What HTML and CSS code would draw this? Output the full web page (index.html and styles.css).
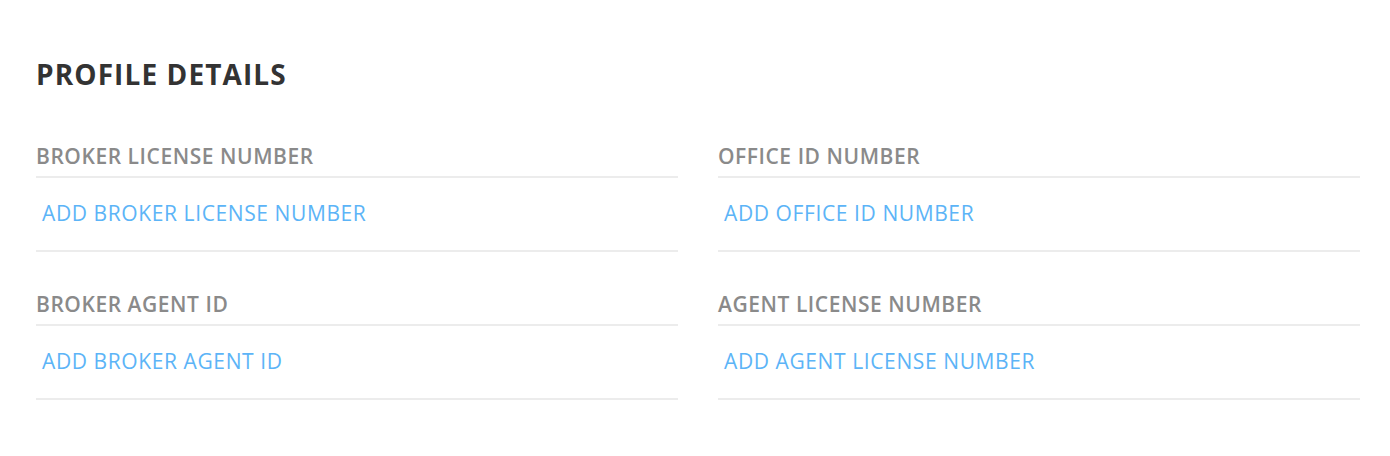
FILE: index.html
```html
<!DOCTYPE html>
<html>
<head>
<meta charset="utf-8">
<link rel="stylesheet" href="styles.css">
</head>
<body>
<div class="page">
  <h1 class="title">PROFILE DETAILS</h1>
  <div class="grid">
    <div class="field">
      <div class="label">BROKER LICENSE NUMBER</div>
      <div class="value"><a class="add">ADD BROKER LICENSE NUMBER</a></div>
    </div>
    <div class="field">
      <div class="label">OFFICE ID NUMBER</div>
      <div class="value"><a class="add">ADD OFFICE ID NUMBER</a></div>
    </div>
    <div class="field">
      <div class="label">BROKER AGENT ID</div>
      <div class="value"><a class="add">ADD BROKER AGENT ID</a></div>
    </div>
    <div class="field">
      <div class="label">AGENT LICENSE NUMBER</div>
      <div class="value"><a class="add">ADD AGENT LICENSE NUMBER</a></div>
    </div>
  </div>
</div>
</body>
</html>
```
FILE: styles.css
```css
html, body {
  margin: 0;
  padding: 0;
  background: #ffffff;
}
body {
  font-family: "Open Sans", "Liberation Sans", sans-serif;
}
.page {
  padding: 55px 30px 0 36px;
}
.title {
  margin: 0;
  font-size: 28px;
  line-height: 38px;
  font-weight: 700;
  letter-spacing: 1.1px;
  color: #333333;
}
.grid {
  margin-top: 49px;
  display: grid;
  grid-template-columns: 1fr 1fr;
  column-gap: 40px;
  row-gap: 38px;
}
.label {
  font-size: 21px;
  line-height: 28px;
  font-weight: 600;
  letter-spacing: 0.55px;
  color: #8a8a8a;
  padding-bottom: 6px;
  border-bottom: 2px solid #ececec;
}
.value {
  padding: 21px 0 23px 6px;
  font-size: 21px;
  line-height: 28px;
  letter-spacing: 0.6px;
  border-bottom: 2px solid #ececec;
}
.add {
  color: #5cb4f7;
  cursor: pointer;
}
```
